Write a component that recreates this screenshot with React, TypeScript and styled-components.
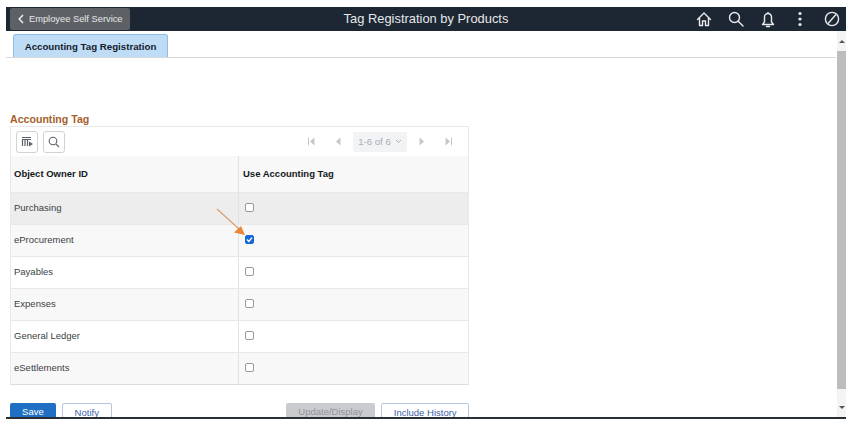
import React from "react";
import styled, { createGlobalStyle } from "styled-components";

const Global = createGlobalStyle`
  html, body { margin: 0; padding: 0; background: #fff; }
  body { width: 856px; height: 424px; overflow: hidden; font-family: "Liberation Sans", Arial, sans-serif; }
`;

const Page = styled.div`
  width: 856px;
  height: 424px;
  padding: 7px 10px 5px 6px;
  box-sizing: border-box;
  display: flex;
  flex-direction: column;
  background: #fff;
`;

const Header = styled.header`
  height: 24px;
  flex: none;
  background: #1d2733;
  display: grid;
  grid-template-columns: 1fr auto 1fr;
  align-items: center;
`;

const BackButton = styled.button`
  justify-self: start;
  margin-left: 4px;
  width: 120px;
  height: 22px;
  border: 0;
  border-radius: 2px;
  background: #5d6166;
  color: #e8e8e8;
  font: 9.3px "Liberation Sans", sans-serif;
  display: flex;
  align-items: center;
  gap: 5px;
  padding: 0 0 0 8px;
`;

const Title = styled.h1`
  margin: 0;
  font: 400 12.9px "Liberation Sans", sans-serif;
  color: #e6e8ea;
  transform: translateY(-1px);
`;

const HeaderIcons = styled.div`
  justify-self: end;
  display: flex;
  align-items: center;
  gap: 10px;
  padding-right: 3px;
  svg { display: block; width: 22px; height: 18px; }
`;

const Body = styled.div`
  flex: 1;
  min-height: 0;
  display: flex;
  border-bottom: 2px solid #2a2f33;
`;

const Content = styled.main`
  flex: 1;
  min-width: 0;
  overflow: hidden;
`;

const Tabs = styled.div`
  height: 27px;
  box-sizing: border-box;
  padding: 3px 0 0 7px;
  border-bottom: 1px solid #d8d8d8;
`;

const Tab = styled.div`
  width: 155px;
  height: 23px;
  box-sizing: border-box;
  background: #bfdcf6;
  border: 1px solid #8fbde6;
  border-bottom: 0;
  border-radius: 3px 3px 0 0;
  color: #14202c;
  font: 700 9.7px/23px "Liberation Sans", sans-serif;
  text-align: center;
`;

const Section = styled.section`
  padding: 55px 0 0 4px;
  width: 459px;
`;

const SectionTitle = styled.h2`
  margin: 0;
  height: 13px;
  color: #a5602c;
  font: 700 10.6px/13px "Liberation Sans", sans-serif;
`;

const Grid = styled.div`
  border: 1px solid #e9e9e9;
  border-bottom-color: #dcdcdc;
`;

const Toolbar = styled.div`
  height: 29px;
  display: flex;
  align-items: center;
  padding: 0 5px;
  gap: 5px;
`;

const ToolButton = styled.span`
  width: 22px;
  height: 22px;
  box-sizing: border-box;
  border: 1px solid #d2d2d2;
  border-radius: 3px;
  display: flex;
  align-items: center;
  justify-content: center;
  background: #fff;
`;

const Pager = styled.div`
  margin-left: auto;
  display: flex;
  align-items: center;
  color: #b9bec3;
  font: 9.6px "Liberation Sans", sans-serif;
  padding-right: 11px;
  gap: 12px;
  svg { display: block; }
`;

const PagerPair = styled.span`
  display: flex;
  align-items: center;
  gap: 19px;
`;

const PageSelect = styled.span`
  width: 54px;
  height: 20px;
  background: #f1f3f5;
  border-radius: 2px;
  display: flex;
  align-items: center;
  justify-content: center;
  gap: 4px;
  color: #a9aeb3;
`;

const Row = styled.div<{ $bg: string }>`
  display: grid;
  grid-template-columns: 228px 1fr;
  height: 32px;
  box-sizing: border-box;
  background: ${(p) => p.$bg};
  border-top: 1px solid #e8e8e8;
  color: #3a3f44;
  font: 9.5px "Liberation Sans", sans-serif;
  align-items: center;
`;

const HeadRow = styled(Row)`
  height: 36px;
  color: #14181c;
  font-weight: 700;
  border-top: 0;
`;

const NameCell = styled.div`
  padding: 0 0 2px 3px;
  height: 100%;
  box-sizing: border-box;
  display: flex;
  align-items: center;
  border-right: 1px solid #e2e2e2;
`;

const CheckCell = styled.div`
  padding: 0 0 2px 4px;
  height: 100%;
  box-sizing: border-box;
  display: flex;
  align-items: center;
  position: relative;
`;

const Box = styled.span<{ $on?: boolean }>`
  margin-left: 2px;
  width: 9px;
  height: 9px;
  box-sizing: border-box;
  border: 1px solid ${(p) => (p.$on ? "#1668d8" : "#9a9a9a")};
  border-radius: 2px;
  background: ${(p) => (p.$on ? "#1668d8" : "#fff")};
  display: flex;
  align-items: center;
  justify-content: center;
`;

const Arrow = styled.svg`
  position: absolute;
  left: -22px;
  top: -16px;
  width: 32px;
  height: 32px;
  overflow: visible;
`;

const Actions = styled.div`
  display: flex;
  padding-top: 18px;
  height: 24px;
  align-items: flex-start;
`;

const Btn = styled.span<{ $kind: "primary" | "plain" | "disabled"; $w: number; $ml: number }>`
  width: ${(p) => p.$w}px;
  margin-left: ${(p) => p.$ml}px;
  height: 24px;
  box-sizing: border-box;
  border-radius: 2px;
  text-align: center;
  font: 9.5px/18px "Liberation Sans", sans-serif;
  background: ${(p) => (p.$kind === "primary" ? "#1f6fc4" : p.$kind === "disabled" ? "#c9cbce" : "#fff")};
  color: ${(p) => (p.$kind === "primary" ? "#fff" : p.$kind === "disabled" ? "#8f949a" : "#3d5fa8")};
  border: ${(p) => (p.$kind === "plain" ? "1px solid #b4c6e2" : "0")};
`;

const Scrollbar = styled.div`
  width: 9px;
  flex: none;
  margin-left: 1px;
  background: #f4f4f4;
  display: flex;
  flex-direction: column;
  align-items: center;
`;

const ScrollArrow = styled.span<{ $up?: boolean }>`
  height: 20px;
  flex: none;
  display: flex;
  align-items: center;
  &::before {
    content: "";
    border-left: 3px solid transparent;
    border-right: 3px solid transparent;
    ${(p) => (p.$up ? "border-bottom: 3px solid #555;" : "border-top: 3px solid #555;")}
  }
`;

const ScrollThumb = styled.span`
  width: 100%;
  height: 338px;
  flex: none;
  background: #bdbdbd;
`;

const Spacer = styled.span`
  flex: 1;
`;

const rows = ["Purchasing", "eProcurement", "Payables", "Expenses", "General Ledger", "eSettlements"];
const backgrounds = ["#ededed", "#f8f8f8", "#fff", "#f8f8f8", "#fff", "#f8f8f8"];

const stroke = { fill: "none", stroke: "#e8eaec", strokeWidth: 1.4, strokeLinecap: "round" as const, strokeLinejoin: "round" as const };

function PagerIcon({ dir, bar }: { dir: "l" | "r"; bar?: boolean }) {
  return (
    <svg width="7" height="9" viewBox="0 0 7 9" fill="#c3c7cc">
      {dir === "l" ? <path d="M6.5 0.5v8L2 4.5z" /> : <path d="M0.5 0.5v8L5 4.5z" />}
      {bar && <rect x={dir === "l" ? 0 : 6} y="0.5" width="1" height="8" />}
    </svg>
  );
}

export default function App() {
  return (
    <Page>
      <Global />
      <Header>
        <BackButton>
          <svg width="6" height="10" viewBox="0 0 6 10"><path d="M5 1 1.2 5 5 9" fill="none" stroke="#eee" strokeWidth="1.5" /></svg>
          Employee Self Service
        </BackButton>
        <Title>Tag Registration by Products</Title>
        <HeaderIcons>
          <svg viewBox="0 0 22 18"><path {...stroke} d="M4.5 9.5 11 3l6.5 6.5M6.5 8v7.5h3v-4.5h3v4.5h3V8" /></svg>
          <svg viewBox="0 0 22 18"><circle {...stroke} cx="9.5" cy="7.5" r="5" /><path {...stroke} d="m13.2 11.2 4.8 4.8" /></svg>
          <svg viewBox="0 0 22 18"><path {...stroke} d="M5.5 14.5h11l-2-2.5V7a3.5 3.5 0 0 0-7 0v5zM11 3.5V2.5M9.5 16.5h3" /></svg>
          <svg viewBox="0 0 22 18"><g fill="#e8eaec"><circle cx="11" cy="3.5" r="1.6" /><circle cx="11" cy="9" r="1.6" /><circle cx="11" cy="14.5" r="1.6" /></g></svg>
          <svg viewBox="0 0 22 18"><circle {...stroke} cx="11" cy="9" r="6.6" /><path {...stroke} d="M7.5 13 14.5 5" /></svg>
        </HeaderIcons>
      </Header>
      <Body>
        <Content>
          <Tabs><Tab>Accounting Tag Registration</Tab></Tabs>
          <Section>
            <SectionTitle>Accounting Tag</SectionTitle>
            <Grid>
              <Toolbar>
                <ToolButton>
                  <svg width="13" height="12" viewBox="0 0 13 12"><path d="M1 1.5h9M1 3.5h9" stroke="#5a6068" strokeWidth="1.2" /><path d="M1.5 4v6M4 4v6M6.5 4v6" stroke="#5a6068" strokeWidth="1.2" fill="none" /><path d="M8 5.5 12 8 8 10.5z" fill="#5a6068" /></svg>
                </ToolButton>
                <ToolButton>
                  <svg width="12" height="12" viewBox="0 0 12 12"><circle cx="5" cy="5" r="3.8" fill="none" stroke="#5a6068" strokeWidth="1.1" /><path d="m7.8 7.8 3.2 3.2" stroke="#5a6068" strokeWidth="1.1" /></svg>
                </ToolButton>
                <Pager>
                  <PagerPair>
                    <PagerIcon dir="l" bar />
                    <PagerIcon dir="l" />
                  </PagerPair>
                  <PageSelect>1-6 of 6 <svg width="7" height="5" viewBox="0 0 7 5"><path d="m1 1 2.5 2.5L6 1" fill="none" stroke="#a9aeb3" /></svg></PageSelect>
                  <PagerPair>
                    <PagerIcon dir="r" />
                    <PagerIcon dir="r" bar />
                  </PagerPair>
                </Pager>
              </Toolbar>
              <HeadRow $bg="#f8f8f8">
                <NameCell>Object Owner ID</NameCell>
                <CheckCell>Use Accounting Tag</CheckCell>
              </HeadRow>
              {rows.map((name, i) => (
                <Row key={name} $bg={backgrounds[i]}>
                  <NameCell>{name}</NameCell>
                  <CheckCell>
                    <Box $on={i === 1}>
                      {i === 1 && <svg width="7" height="7" viewBox="0 0 7 7"><path d="m1 3.6 1.8 1.8L6 1.6" fill="none" stroke="#fff" strokeWidth="1.4" /></svg>}
                    </Box>
                    {i === 1 && (
                      <Arrow viewBox="0 0 32 32">
                        <path d="M0 0 22 20" stroke="#dd9d6c" strokeWidth="1.2" />
                        <path d="M28 26 17 23.5 24 17z" fill="#e8853a" />
                      </Arrow>
                    )}
                  </CheckCell>
                </Row>
              ))}
            </Grid>
            <Actions>
              <Btn $kind="primary" $w={46} $ml={0}>Save</Btn>
              <Btn $kind="plain" $w={50} $ml={6}>Notify</Btn>
              <Btn $kind="disabled" $w={90} $ml={174}>Update/Display</Btn>
              <Btn $kind="plain" $w={88} $ml={6}>Include History</Btn>
            </Actions>
          </Section>
        </Content>
        <Scrollbar>
          <ScrollArrow $up />
          <ScrollThumb />
          <Spacer />
          <ScrollArrow />
        </Scrollbar>
      </Body>
    </Page>
  );
}
